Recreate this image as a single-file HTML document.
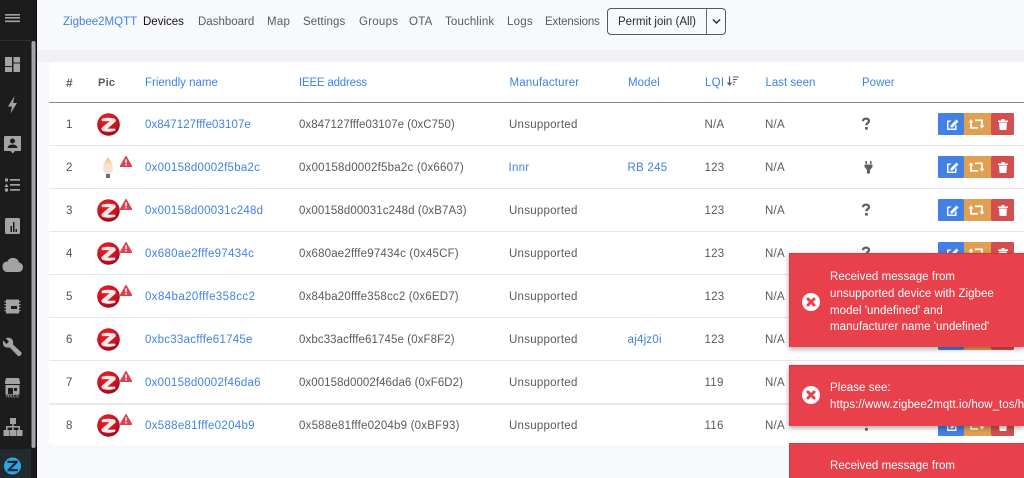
<!DOCTYPE html>
<html><head><meta charset="utf-8"><style>
html,body{margin:0;padding:0;width:1024px;height:478px;overflow:hidden;background:#f8f9fc}
body{position:relative;font-family:"Liberation Sans",sans-serif;font-size:12px;color:#444950}
.t{position:absolute;white-space:nowrap;line-height:16px;height:16px}
.b{color:#3f82e6}
.n{color:#555b61}
.g{color:#4c5157}
.h{font-size:11.5px;letter-spacing:.25px}
.v{font-size:11.5px;letter-spacing:0}
.ln{position:absolute;left:49px;right:0;height:1px;background:#e3e6ea}
.i{position:absolute}
.toast{position:absolute;left:789px;width:235px;overflow:hidden;background:#e8414c;border-top:1px solid #d93642;border-left:1px solid #d93642;box-sizing:border-box;box-shadow:0 2px 5px rgba(0,0,0,.35);color:#fff}
.toast .t{color:#fff;font-size:11.5px;letter-spacing:.05px}
</style></head><body>
<div style="position:absolute;left:37px;top:50px;right:0;height:12px;background:#f0f1f4"></div>
<div style="position:absolute;left:49px;top:62px;right:0;height:383px;background:#fff;border-radius:5px 0 0 5px"></div>

<svg width="0" height="0" style="position:absolute"><defs>
<radialGradient id="rg" cx=".4" cy=".3" r=".8"><stop offset="0" stop-color="#e22"/><stop offset=".7" stop-color="#c10f1f"/><stop offset="1" stop-color="#7c0712"/></radialGradient>
<symbol id="z" viewBox="0 0 22 22"><circle cx="11" cy="11" r="10.8" fill="url(#rg)"/><path d="M4.500 5.500 Q11 3.500 17.500 5.500 L18 8 L10 15 L17.500 15 L17.500 17 Q11 19 5 17 L4 14.700 L12 7.800 L4.500 7.800Z" fill="#f6e9ea"/></symbol>
<symbol id="w" viewBox="0 0 12 11"><path d="M6 0.300 L12 10.600 L0 10.600Z" fill="#d9444e" stroke="#d9444e" stroke-linejoin="round"/><rect x="5.300" y="3.400" width="1.400" height="3.800" fill="#fff"/><rect x="5.300" y="8" width="1.400" height="1.400" fill="#fff"/></symbol>
<symbol id="acts" viewBox="0 0 76 22">
<rect width="26" height="22" fill="#4280e3" rx="1"/><rect x="26" width="27" height="22" fill="#e0a052"/><rect x="53" width="23" height="22" fill="#d1504f" rx="1"/>
<path d="M9 7.500H13.500L12 9H10.500V15.500H17V13L18.500 11.500V17H9Z" fill="#fff"/><path d="M12.500 12.500L18.500 6.500L20.500 8.500L14.500 14.500H12.500Z" fill="#fff"/>
<path d="M33 8.500V14.800H40" fill="none" stroke="#fff" stroke-width="1.700"/><path d="M30.500 9.500L33 6.300L35.500 9.500Z" fill="#fff"/>
<path d="M37 7.300H44V13.500" fill="none" stroke="#fff" stroke-width="1.700"/><path d="M41.500 12.500L44 15.700L46.500 12.500Z" fill="#fff"/>
<path d="M60 7.500H70V9H60Z M63.500 6H66.500V7.500H63.500Z M61 9.500H69L68.400 17H61.600Z" fill="#fff"/>
</symbol>
<symbol id="x" viewBox="0 0 18 18"><circle cx="9" cy="9" r="9" fill="#fff"/><path d="M6 6L12 12M12 6L6 12" stroke="#e8414c" stroke-width="3" stroke-linecap="round"/></symbol>
<symbol id="q" viewBox="0 0 10 13"><path d="M2 4.200C2 2.500 3.300 1.600 5 1.600S8 2.700 8 4C8 6 5.400 6 5.400 8.300" fill="none" stroke="#5c6167" stroke-width="2.300"/><rect x="4" y="10" width="2.800" height="2.600" fill="#5c6167"/></symbol>
</defs></svg>

<!-- sidebar -->
<svg class="i" style="left:0;top:0" width="37" height="478" viewBox="0 0 37 478">
<rect width="37" height="478" fill="#1c1c1c"/><rect x="36" width="1" height="478" fill="#0c0c0c"/>
<rect x="0" y="40" width="31" height="1" fill="#2f2f2f"/>
<rect x="0" y="449" width="31" height="29" fill="#222a30"/>
<rect x="31.500" y="41" width="4" height="407" rx="2" fill="#a4a4a4"/>
<g fill="#a3a3a3">
<rect x="5" y="14" width="15" height="1.600"/><rect x="5" y="17" width="15" height="1.600"/><rect x="5" y="20.500" width="15" height="1.600"/>
<rect x="5" y="57" width="7" height="9"/><rect x="13.500" y="57" width="6.500" height="5.500"/><rect x="5" y="67" width="7" height="5"/><rect x="13.500" y="63.500" width="6.500" height="8.500"/>
<path d="M14.500 96L8 106.500H12L10.500 113.500L17 103H13Z"/>
<path d="M5.500 136H20.500Q21 136 21 137V150Q21 151 20 151H15L12.800 153.500 10.500 151H5.500Q4 151 4 150V137Q4 136 5.500 136Z"/>
<rect x="5" y="178.500" width="3" height="3"/><path d="M6.500 183.500L8.500 187H4.500Z"/><circle cx="6.500" cy="190" r="1.700"/>
<rect x="10" y="179" width="10" height="1.700"/><rect x="10" y="184" width="10" height="1.700"/><rect x="10" y="189" width="10" height="1.700"/>
<rect x="5" y="218" width="15" height="16" rx="1.500"/>
<path d="M2.500 266.500C2.500 263 5 261.500 7.500 261.500C9 258 11.500 258 13 258C16.500 258 18.500 260 19 262.500C21.500 263 23 265 23 267C23 270 21 272 18.500 272H7C4.500 272 2.500 270 2.500 266.500Z"/>
<rect x="6" y="299.500" width="13" height="14"/><rect x="4.500" y="301" width="16" height="1.200"/><rect x="4.500" y="304" width="16" height="1.200"/><rect x="4.500" y="307" width="16" height="1.200"/><rect x="4.500" y="310" width="16" height="1.200"/>
<path d="M3 340.500L6.500 344L9 341.500L5.800 338.500C8 337 11.500 338 12.500 340C13.500 342 13 343.500 13 344.500L21.500 352.500Q22 354 20.500 355.500Q19 356.500 18 356L9.800 347.500C7.500 348 4.800 347.500 3.500 345.500C3 344 2.800 342 3 340.500Z"/>
<path d="M6 378H19L20 382V384H5V382Z"/><rect x="5.500" y="385" width="14" height="9.500"/>
<rect x="10" y="418" width="6" height="6"/><rect x="12.200" y="424" width="1.500" height="3"/><rect x="6" y="426" width="14" height="1.500"/><rect x="6" y="426" width="1.500" height="4"/><rect x="18.500" y="426" width="1.500" height="4"/><rect x="12.200" y="426" width="1.500" height="4"/>
<rect x="3.500" y="430" width="6" height="6"/><rect x="10" y="430" width="6" height="6"/><rect x="16.500" y="430" width="6" height="6"/>
</g>
<rect x="10.500" y="226" width="1.500" height="6" fill="#1c1c1c"/><rect x="13" y="222" width="1.500" height="10" fill="#1c1c1c"/><rect x="15.500" y="229" width="1.500" height="3" fill="#1c1c1c"/>
<circle cx="12.500" cy="141" r="2.500" fill="#1c1c1c"/><path d="M7.500 148Q8 144.500 12.500 144.500T17.500 148Z" fill="#1c1c1c"/>
<rect x="8" y="388" width="5" height="6" fill="#1c1c1c"/><rect x="14" y="388" width="3" height="3" fill="#1c1c1c"/>
<rect x="11" y="306" width="6" height="3" fill="#1c1c1c"/>
<text x="12.500" y="397.500" font-family="Liberation Sans" font-size="4.500" font-weight="700" fill="#a3a3a3" text-anchor="middle">HACS</text>
<circle cx="12.500" cy="466" r="8.500" fill="#27aae1"/><path d="M7.500 460.800H17.800V462.500L11 469H17.800V471.200H7.500V469.500L14.300 463H7.500Z" fill="#10222e"/>
</svg>

<!-- nav -->
<div class="t b v" style="left:63px;top:14px">Zigbee2MQTT</div>
<div class="t v" style="left:143px;top:14px;color:#111">Devices</div>
<div class="t v n" style="left:198px;top:14px">Dashboard</div>
<div class="t h n" style="left:267px;top:14px">Map</div>
<div class="t h n" style="left:303px;top:14px;letter-spacing:.1px">Settings</div>
<div class="t h n" style="left:359px;top:14px">Groups</div>
<div class="t h n" style="left:409px;top:14px">OTA</div>
<div class="t h n" style="left:445px;top:14px;letter-spacing:.15px">Touchlink</div>
<div class="t h n" style="left:507px;top:14px">Logs</div>
<div class="t h n" style="left:545px;top:14px;letter-spacing:-.15px">Extensions</div>
<div style="position:absolute;left:607px;top:8px;width:117px;height:25px;border:1px solid #55595e;border-radius:4px"></div>
<div style="position:absolute;left:705.500px;top:9px;width:1.500px;height:25px;background:#6c7075"></div>
<div class="t v" style="left:618px;top:14px;color:#26292d">Permit join (All)</div>
<svg class="i" style="left:712px;top:18px" width="9" height="7"><path d="M1 1.500L4.500 5L8 1.500" fill="none" stroke="#2a2d31" stroke-width="1.500"/></svg>

<!-- header -->
<div class="t h g" style="left:66px;top:75px;font-weight:700;font-size:12px;color:#555b61">#</div>
<div class="t h g" style="left:98px;top:75px;font-weight:700;font-size:11px;color:#555b61">Pic</div>
<div class="t b v" style="left:145px;top:75px">Friendly name</div>
<div class="t b v" style="left:299px;top:75px;letter-spacing:-.2px">IEEE address</div>
<div class="t b h" style="left:509.500px;top:75px;letter-spacing:.17px">Manufacturer</div>
<div class="t b h" style="left:628px;top:75px;letter-spacing:.1px">Model</div>
<div class="t b h" style="left:705px;top:75px">LQI</div>
<svg class="i" style="left:727px;top:76px" width="12" height="11"><path d="M2.500 0.500V8.500M0.500 6.500L2.500 9L4.500 6.500" fill="none" stroke="#555b61" stroke-width="1.200"/><path d="M6 1H11.500M6 3.500H10M6 6H8.500M6 8.500H7.500" stroke="#555b61" stroke-width="1.100"/></svg>
<div class="t b v" style="left:765.500px;top:75px">Last seen</div>
<div class="t b v" style="left:862px;top:75px">Power</div>
<div class="ln" style="top:102px;height:1px;background:#83888d"></div>
<div class="ln" style="top:145px"></div><div class="ln" style="top:188px"></div><div class="ln" style="top:231px"></div><div class="ln" style="top:274px"></div><div class="ln" style="top:317px"></div><div class="ln" style="top:360px"></div><div class="ln" style="top:403px;height:2px;background:#e8eaee"></div>

<!-- rows -->
<div class="t h g" style="left:66px;top:117px">1</div><svg class="i" style="left:97px;top:113px" width="23" height="23"><use href="#z"/></svg>
<div class="t b h" style="left:145px;top:117px;letter-spacing:.08px">0x847127fffe03107e</div><div class="t h n" style="left:299px;top:117px;letter-spacing:.03px">0x847127fffe03107e (0xC750)</div><div class="t h n" style="left:509px;top:117px">Unsupported</div><div class="t h n" style="left:704.500px;top:117px">N/A</div><div class="t h n" style="left:765px;top:117px">N/A</div>

<div class="t h g" style="left:66px;top:160px">2</div>
<svg class="i" style="left:100px;top:156px" width="16" height="23" viewBox="0 0 16 23"><defs><linearGradient id="bulb" x1="0" y1="0" x2="0" y2="1"><stop offset="0" stop-color="#f6b77c"/><stop offset=".5" stop-color="#fce4c8"/><stop offset="1" stop-color="#e4e4e4"/></linearGradient></defs><path d="M8 1C10 4 13 8 13 12C13 15.500 10.500 16.500 10.500 18H5.500C5.500 16.500 3 15.500 3 12C3 8 6 4 8 1Z" fill="url(#bulb)"/><rect x="6" y="18" width="4" height="4" fill="#6b6b63"/></svg>
<svg class="i" style="left:120px;top:156px" width="12" height="11"><use href="#w"/></svg>
<div class="t b h" style="left:145px;top:160px">0x00158d0002f5ba2c</div><div class="t h n" style="left:299px;top:160px;letter-spacing:.21px">0x00158d0002f5ba2c (0x6607)</div><div class="t b h" style="left:508.500px;top:160px">Innr</div><div class="t b h" style="left:627.500px;top:160px">RB 245</div><div class="t h n" style="left:704.500px;top:160px">123</div><div class="t h n" style="left:765px;top:160px">N/A</div>

<div class="t h g" style="left:66px;top:203px">3</div><svg class="i" style="left:97px;top:199px" width="23" height="23"><use href="#z"/></svg><svg class="i" style="left:120px;top:199px" width="12" height="11"><use href="#w"/></svg>
<div class="t b h" style="left:145px;top:203px">0x00158d00031c248d</div><div class="t h n" style="left:299px;top:203px;letter-spacing:.1px">0x00158d00031c248d (0xB7A3)</div><div class="t h n" style="left:509px;top:203px">Unsupported</div><div class="t h n" style="left:704.500px;top:203px">123</div><div class="t h n" style="left:765px;top:203px">N/A</div>

<div class="t h g" style="left:66px;top:246px">4</div><svg class="i" style="left:97px;top:242px" width="23" height="23"><use href="#z"/></svg><svg class="i" style="left:120px;top:242px" width="12" height="11"><use href="#w"/></svg>
<div class="t b h" style="left:145px;top:246px;letter-spacing:.3px">0x680ae2fffe97434c</div><div class="t h n" style="left:299px;top:246px;letter-spacing:.18px">0x680ae2fffe97434c (0x45CF)</div><div class="t h n" style="left:509px;top:246px">Unsupported</div><div class="t h n" style="left:704.500px;top:246px">123</div><div class="t h n" style="left:765px;top:246px">N/A</div>

<div class="t h g" style="left:66px;top:289px">5</div><svg class="i" style="left:97px;top:285px" width="23" height="23"><use href="#z"/></svg><svg class="i" style="left:120px;top:285px" width="12" height="11"><use href="#w"/></svg>
<div class="t b h" style="left:145px;top:289px;letter-spacing:.4px">0x84ba20fffe358cc2</div><div class="t h n" style="left:299px;top:289px;letter-spacing:.18px">0x84ba20fffe358cc2 (0x6ED7)</div><div class="t h n" style="left:509px;top:289px">Unsupported</div><div class="t h n" style="left:704.500px;top:289px">123</div><div class="t h n" style="left:765px;top:289px">N/A</div>

<div class="t h g" style="left:66px;top:332px">6</div><svg class="i" style="left:97px;top:328px" width="23" height="23"><use href="#z"/></svg>
<div class="t b h" style="left:145px;top:332px">0xbc33acfffe61745e</div><div class="t h n" style="left:299px;top:332px;letter-spacing:.1px">0xbc33acfffe61745e (0xF8F2)</div><div class="t h n" style="left:509px;top:332px">Unsupported</div><div class="t b h" style="left:627.500px;top:332px">aj4jz0i</div><div class="t h n" style="left:704.500px;top:332px">123</div><div class="t h n" style="left:765px;top:332px">N/A</div>

<div class="t h g" style="left:66px;top:375px">7</div><svg class="i" style="left:97px;top:371px" width="23" height="23"><use href="#z"/></svg><svg class="i" style="left:120px;top:371px" width="12" height="11"><use href="#w"/></svg>
<div class="t b h" style="left:145px;top:375px">0x00158d0002f46da6</div><div class="t h n" style="left:299px;top:375px;letter-spacing:.06px">0x00158d0002f46da6 (0xF6D2)</div><div class="t h n" style="left:509px;top:375px">Unsupported</div><div class="t h n" style="left:704.500px;top:375px">119</div><div class="t h n" style="left:765px;top:375px">N/A</div>

<div class="t h g" style="left:66px;top:418px">8</div><svg class="i" style="left:97px;top:414px" width="23" height="23"><use href="#z"/></svg><svg class="i" style="left:120px;top:414px" width="12" height="11"><use href="#w"/></svg>
<div class="t b h" style="left:145px;top:418px;letter-spacing:.3px">0x588e81fffe0204b9</div><div class="t h n" style="left:299px;top:418px;letter-spacing:.21px">0x588e81fffe0204b9 (0xBF93)</div><div class="t h n" style="left:509px;top:418px">Unsupported</div><div class="t h n" style="left:704.500px;top:418px">116</div><div class="t h n" style="left:765px;top:418px">N/A</div>

<!-- power -->
<svg class="i" style="left:861px;top:117px" width="10" height="13"><use href="#q"/></svg>
<svg class="i" style="left:864px;top:161px" width="9" height="13" viewBox="0 0 9 13"><rect x="1.500" y="0" width="1.500" height="3" fill="#5c6167"/><rect x="6" y="0" width="1.500" height="3" fill="#5c6167"/><path d="M0.500 3.500H8.500V6L6 9V12.500H3V9L0.500 6Z" fill="#5c6167"/></svg>
<svg class="i" style="left:861px;top:203px" width="10" height="13"><use href="#q"/></svg>
<svg class="i" style="left:861px;top:246px" width="10" height="13"><use href="#q"/></svg>
<svg class="i" style="left:861px;top:418px" width="10" height="13"><use href="#q"/></svg>

<!-- action buttons -->
<svg class="i" style="left:938px;top:113px" width="76" height="22"><use href="#acts"/></svg>
<svg class="i" style="left:938px;top:156px" width="76" height="22"><use href="#acts"/></svg>
<svg class="i" style="left:938px;top:199px" width="76" height="22"><use href="#acts"/></svg>
<svg class="i" style="left:938px;top:242px" width="76" height="22"><use href="#acts"/></svg>
<svg class="i" style="left:938px;top:328px" width="76" height="22"><use href="#acts"/></svg>
<svg class="i" style="left:938px;top:414px" width="76" height="22"><use href="#acts"/></svg>

<!-- toasts -->
<div class="toast" style="top:253px;height:94px">
<svg class="i" style="left:12px;top:39px" width="18" height="18"><use href="#x"/></svg>
<div class="t" style="left:40px;top:15px">Received message from</div>
<div class="t" style="left:40px;top:32px">unsupported device with Zigbee</div>
<div class="t" style="left:40px;top:49px">model 'undefined' and</div>
<div class="t" style="left:40px;top:65px">manufacturer name 'undefined'</div>
</div>
<div class="toast" style="top:365px;height:61px">
<svg class="i" style="left:12px;top:20px" width="18" height="18"><use href="#x"/></svg>
<div class="t" style="left:40px;top:14px">Please see:</div>
<div class="t" style="left:40px;top:31px">https://www.zigbee2mqtt.io/how_tos/how_to_support</div>
</div>
<div class="toast" style="top:443px;height:35px;box-shadow:none">
<div class="t" style="left:40px;top:14px">Received message from</div>
</div>
</body></html>
